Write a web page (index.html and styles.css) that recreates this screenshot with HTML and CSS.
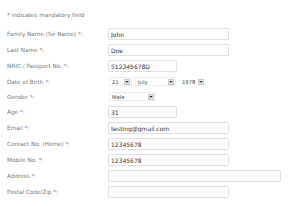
FILE: index.html
```html
<!DOCTYPE html>
<html lang="en">
<head>
    <meta charset="UTF-8">
    <title>Registration</title>
    <link rel="stylesheet" href="styles.css">
</head>
<body>
    <p class="note">* indicates mandatory field</p>
    <form class="reg-form">
        <div class="row">
            <label for="family">Family Name (Sir Name) *:</label>
            <input type="text" id="family" class="long" value="John">
        </div>
        <div class="row">
            <label for="last">Last Name *:</label>
            <input type="text" id="last" class="long" value="Doe">
        </div>
        <div class="row">
            <label for="nric">NRIC / Passport No. *:</label>
            <input type="text" id="nric" class="short" value="S12345678D">
        </div>
        <div class="row sel-row">
            <label>Date of Birth *:</label>
            <span class="sel sel-day">21<span class="btn"><svg viewBox="0 0 5 3" width="4" height="2"><path d="M0 0H5L2.5 3Z" fill="#333"/></svg></span></span>
            <span class="sel sel-month">July<span class="btn"><svg viewBox="0 0 5 3" width="4" height="2"><path d="M0 0H5L2.5 3Z" fill="#333"/></svg></span></span>
            <span class="sel sel-year">1978<span class="btn"><svg viewBox="0 0 5 3" width="4" height="2"><path d="M0 0H5L2.5 3Z" fill="#333"/></svg></span></span>
        </div>
        <div class="row sel-row">
            <label>Gender *:</label>
            <span class="sel sel-gender">Male<span class="btn"><svg viewBox="0 0 5 3" width="4" height="2"><path d="M0 0H5L2.5 3Z" fill="#333"/></svg></span></span>
        </div>
        <div class="row">
            <label for="age">Age *:</label>
            <input type="text" id="age" class="short" value="31">
        </div>
        <div class="row">
            <label for="email">Email *:</label>
            <input type="text" id="email" class="long" value="testing@gmail.com">
        </div>
        <div class="row">
            <label for="home">Contact No. (Home) *:</label>
            <input type="text" id="home" class="long" value="12345678">
        </div>
        <div class="row">
            <label for="mobile">Mobile No. *:</label>
            <input type="text" id="mobile" class="long" value="12345678">
        </div>
        <div class="row">
            <label for="address">Address *:</label>
            <input type="text" id="address" class="wide" value="">
        </div>
        <div class="row">
            <label for="postal">Postal Code/Zip *:</label>
            <input type="text" id="postal" class="long" value="">
        </div>
    </form>
</body>
</html>
```

FILE: styles.css
```css
body {
    font-family: 'DejaVu Sans', Verdana, sans-serif;
    font-size: 5.7px;
    color: #7a7a7a;
    background: #fff;
    margin: 0;
    padding: 0 0 0 7px;
}
.note {
    margin: 0;
    height: 26px;
    line-height: 30px;
}
.reg-form {
    margin: 0;
}
.row {
    display: flex;
    align-items: center;
    height: 16px;
}
.sel-row {
    height: 15px;
}
.row label {
    width: 101px;
    flex: none;
}
.row input {
    box-sizing: border-box;
    height: 12px;
    margin: 0;
    padding: 0 0 0 2px;
    border: 1px solid #e0e0e0;
    border-radius: 1px;
    font-family: inherit;
    font-size: 6px;
    color: #333;
    background: #fff;
}
.row input.long { width: 121px; }
.row input.short { width: 69px; }
.row input.wide { width: 173px; }
.sel {
    box-sizing: border-box;
    display: flex;
    align-items: center;
    justify-content: space-between;
    flex: none;
    height: 9px;
    margin-left: 1px;
    padding-left: 2px;
    border: 1px solid #ececec;
    color: #444;
    font-size: 5.3px;
    white-space: nowrap;
}
.sel .btn {
    box-sizing: border-box;
    display: flex;
    align-items: center;
    justify-content: center;
    flex: none;
    width: 6px;
    height: 6px;
    margin-right: 1px;
    background: #e4e4e4;
    border: 1px solid #c8c8c8;
}
.sel-day { width: 23px; }
.sel-month { width: 41px; margin-left: 3px; }
.sel-year { width: 26px; margin-left: 4px; padding-left: 1px; border-color: #fff; justify-content: flex-start; }
.sel-year .btn { margin: 0 0 0 3px; }
.sel-gender { width: 47px; }
```
